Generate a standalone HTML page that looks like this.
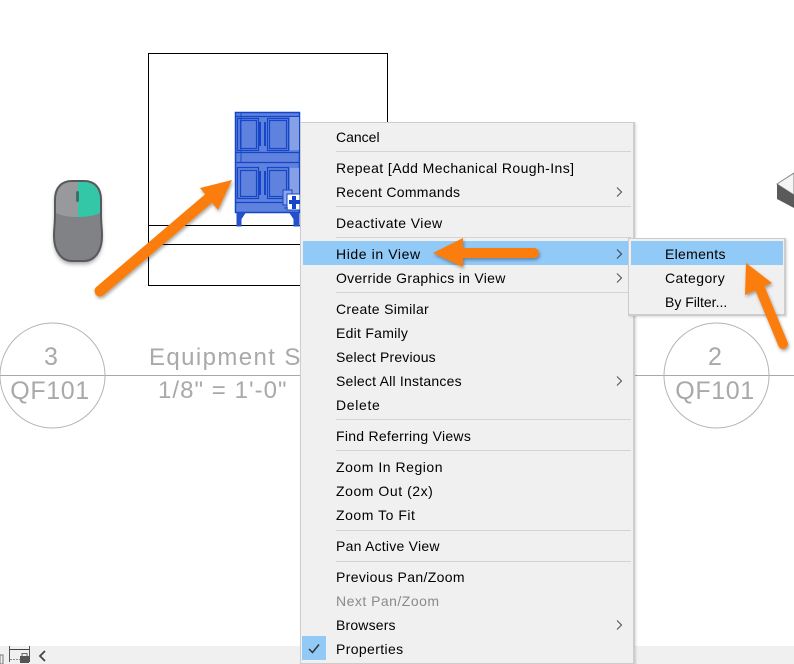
<!DOCTYPE html>
<html><head><meta charset="utf-8">
<style>
html,body{margin:0;padding:0;background:#fff}
#p{position:relative;width:794px;height:664px;overflow:hidden;background:#fff;font-family:"Liberation Sans",sans-serif}
.abs{position:absolute}
.m{position:absolute;left:336px;font-size:14px;line-height:20px;height:20px;color:#000;white-space:nowrap;letter-spacing:.17px}
.s{position:absolute;left:336px;width:295px;height:1px;background:#d4d4d4}
.a{position:absolute;left:615px;width:8px;height:10px}
.g{position:absolute;color:#a9a9a9;white-space:nowrap;text-align:center}
</style></head><body><div id="p">

<svg class="abs" style="left:0;top:0" width="794" height="664">
<rect x="148.500" y="53.500" width="239" height="232" fill="none" stroke="#000"/>
<path d="M148 225.500H388M148 244.500H388" stroke="#000"/>
<path d="M0 375.500H794" stroke="#a8a8a8"/>
<circle cx="52.500" cy="375.500" r="52.500" fill="none" stroke="#b4b4b4"/>
<circle cx="716.500" cy="375.500" r="52.500" fill="none" stroke="#b4b4b4"/>
<path d="M777 184L794 173V195Z" fill="#f4f4f4" stroke="#888"/>
<path d="M777 184L794 195V208L777 199Z" fill="#5a5a5a"/>

<!-- cabinet -->
<rect x="235.500" y="112.500" width="64" height="100" fill="#5f82de" stroke="#1546c8" stroke-width="1.500"/>
<g fill="none" stroke="#1546c8" stroke-width="1.200">
<path d="M236 116.500H299M236 152.500H299M236 162.500H299M236 202.500H299"/>
<rect x="237.500" y="118.500" width="21" height="32"/>
<rect x="267.500" y="118.500" width="21" height="32"/>
<rect x="237.500" y="167.500" width="21" height="31"/>
<rect x="267.500" y="167.500" width="21" height="31"/>
<rect x="240.500" y="120.500" width="16" height="28"/>
<rect x="269.500" y="120.500" width="17" height="28"/>
<rect x="240.500" y="170.500" width="16" height="26"/>
<rect x="269.500" y="170.500" width="17" height="26"/>
</g>
<path d="M259 122H261V146H259ZM264 122H266V146H264ZM259 171H261V195H259ZM264 171H266V195H264Z" fill="#1546c8"/>
<path d="M290 117H299V150H290ZM290 168H299V199H290Z" fill="#86a0e6"/>
<path d="M241 113V162" stroke="#1546c8" stroke-width="2" fill="none" opacity=".45"/>
<path d="M237 213V226H241V219L245 213Z" fill="#2450cc" stroke="#2450cc"/>
<path d="M299 213V226H294V219L290 213Z" fill="#2450cc" stroke="#2450cc"/>
<rect x="283" y="190" width="9" height="15" fill="#8fa6ea" stroke="#1546c8"/>
<rect x="287" y="194" width="13" height="16" fill="#fff" stroke="#1546c8"/>
<path d="M289 202H300M294 196V209" stroke="#1546c8" stroke-width="4"/>
<path d="M284 208H288" stroke="#1546c8"/>

<defs>
<filter id="sh" x="-20%" y="-20%" width="140%" height="140%"><feGaussianBlur stdDeviation="2"/></filter>
</defs>
<!-- mouse -->
<path d="M55 200C55 187 62 181 72 181H84C94 181 101 187 101 200V215C101 224 102 228 102 236C102 252 94 261 84 261H72C62 261 54 252 54 236C54 228 55 224 55 215Z" transform="translate(0,3)" fill="#777" filter="url(#sh)" opacity=".7"/>
<path d="M55 200C55 187 62 181 72 181H84C94 181 101 187 101 200V215C101 224 102 228 102 236C102 252 94 261 84 261H72C62 261 54 252 54 236C54 228 55 224 55 215Z" fill="#818286" stroke="#58595c" stroke-width="2"/>
<path d="M56 200C56 188 63 182 72 182H78V217C69 217 62 216 56 213Z" fill="#98999c"/>
<path d="M78 182H84C93 182 100 188 100 200V213C94 216 86 217 78 217Z" fill="#33c7a7"/>
<rect x="76" y="191" width="3" height="11" rx="1.500" fill="#3f6f68"/>
</svg>

<div class="g" style="left:1px;top:342px;width:100px;font-size:25px;line-height:30px">3</div>
<div class="g" style="left:0;top:376px;width:100px;font-size:25px;line-height:30px;letter-spacing:.6px">QF101</div>
<div class="g" style="left:665px;top:342px;width:100px;font-size:25px;line-height:30px">2</div>
<div class="g" style="left:664px;top:376px;width:102px;font-size:25px;line-height:30px;letter-spacing:.6px">QF101</div>
<div class="g" style="left:149px;top:344px;font-size:24px;line-height:28px;letter-spacing:1.400px;text-align:left">Equipment S</div>
<div class="g" style="left:158px;top:377px;font-size:24px;line-height:28px;letter-spacing:1.050px;text-align:left">1/8" = 1'-0"</div>

<div class="abs" style="left:0;top:646px;width:794px;height:18px;background:#f0f0f0"></div>
<svg class="abs" style="left:0;top:645px" width="60" height="19">
<path d="M0 10H3V19H0Z" fill="none" stroke="#777"/>
<path d="M9.500 1V17M29.500 1V17" stroke="#555" fill="none"/>
<path d="M10 4.500H29" stroke="#444" fill="none"/>
<path d="M10 14.500H20" stroke="#888" stroke-dasharray="2 1"/>
<rect x="20" y="11" width="9" height="7" fill="#555"/>
<path d="M22 11V8.500H27V11" stroke="#666" fill="none"/>
<path d="M45 6L40 11L45 16" stroke="#444" stroke-width="1.800" fill="none"/>
</svg>

<div class="abs" style="left:300px;top:122px;width:332px;height:540px;background:#f0f0f0;border:2px solid #cdcdcd;border-width:1px 2px 2px 1px;box-shadow:1px 1px 2px rgba(0,0,0,.15)"></div>
<div class="abs" style="left:303px;top:241px;width:326px;height:24px;background:#91c9f7"></div>

<div class="s" style="top:151px"></div>
<div class="s" style="top:206px"></div>
<div class="s" style="top:237px"></div>
<div class="s" style="top:292px"></div>
<div class="s" style="top:419px"></div>
<div class="s" style="top:450px"></div>
<div class="s" style="top:530px"></div>
<div class="s" style="top:561px"></div>

<div class="m" style="top:127px;letter-spacing:0">Cancel</div>
<div class="m" style="top:158px;letter-spacing:.41px">Repeat [Add Mechanical Rough-Ins]</div>
<div class="m" style="top:182px;letter-spacing:.3px">Recent Commands</div>
<div class="m" style="top:213px;letter-spacing:.43px">Deactivate View</div>
<div class="m" style="top:244px;letter-spacing:.59px">Hide in View</div>
<div class="m" style="top:268px;letter-spacing:.29px">Override Graphics in View</div>
<div class="m" style="top:299px;letter-spacing:.31px">Create Similar</div>
<div class="m" style="top:323px;letter-spacing:.27px">Edit Family</div>
<div class="m" style="top:347px">Select Previous</div>
<div class="m" style="top:371px;letter-spacing:.22px">Select All Instances</div>
<div class="m" style="top:395px;letter-spacing:.67px">Delete</div>
<div class="m" style="top:426px;letter-spacing:.27px">Find Referring Views</div>
<div class="m" style="top:457px;letter-spacing:.53px">Zoom In Region</div>
<div class="m" style="top:481px;letter-spacing:.55px">Zoom Out (2x)</div>
<div class="m" style="top:505px;letter-spacing:.53px">Zoom To Fit</div>
<div class="m" style="top:536px;letter-spacing:.24px">Pan Active View</div>
<div class="m" style="top:567px;letter-spacing:.35px">Previous Pan/Zoom</div>
<div class="m" style="top:591px;letter-spacing:.48px;color:#8a8a8a">Next Pan/Zoom</div>
<div class="m" style="top:615px">Browsers</div>
<div class="m" style="top:639px;letter-spacing:.37px">Properties</div>

<svg class="a" style="top:187px" viewBox="0 0 8 10"><path d="M2 0.500L6.500 5L2 9.500" fill="none" stroke="#555" stroke-width="1.100"/></svg>
<svg class="a" style="top:249px" viewBox="0 0 8 10"><path d="M2 0.500L6.500 5L2 9.500" fill="none" stroke="#444" stroke-width="1.100"/></svg>
<svg class="a" style="top:273px" viewBox="0 0 8 10"><path d="M2 0.500L6.500 5L2 9.500" fill="none" stroke="#555" stroke-width="1.100"/></svg>
<svg class="a" style="top:376px" viewBox="0 0 8 10"><path d="M2 0.500L6.500 5L2 9.500" fill="none" stroke="#555" stroke-width="1.100"/></svg>
<svg class="a" style="top:620px" viewBox="0 0 8 10"><path d="M2 0.500L6.500 5L2 9.500" fill="none" stroke="#555" stroke-width="1.100"/></svg>

<div class="abs" style="left:302px;top:636px;width:24px;height:24px;background:#91c9f7"></div>
<svg class="abs" style="left:302px;top:636px" width="24" height="24"><path d="M7 13L10.500 16.500L17 8.500" fill="none" stroke="#333" stroke-width="1.500"/></svg>

<div class="abs" style="left:628px;top:238px;width:155px;height:75px;background:#f0f0f0;border:2px solid #cdcdcd;border-width:1px 2px 2px 1px;box-shadow:1px 1px 2px rgba(0,0,0,.15)"></div>
<div class="abs" style="left:631px;top:241px;width:152px;height:24px;background:#91c9f7"></div>
<div class="m" style="left:665px;top:244px;letter-spacing:.3px">Elements</div>
<div class="m" style="left:665px;top:268px;letter-spacing:.42px">Category</div>
<div class="m" style="left:665px;top:292px;letter-spacing:0">By Filter...</div>

<svg class="abs" style="left:0;top:0" width="794" height="664">
<defs><filter id="as" x="-20%" y="-20%" width="150%" height="150%"><feDropShadow dx="1" dy="2" stdDeviation="1.500" flood-color="#000" flood-opacity=".35"/></filter></defs>
<g fill="#fb7d07" stroke="none" filter="url(#as)">
<path d="M100 291L208 199" stroke="#fb7d07" stroke-width="11" stroke-linecap="round"/>
<path d="M232 180L200 188L218 210Z"/>
<path d="M462 253H534" stroke="#fb7d07" stroke-width="10" stroke-linecap="round"/>
<path d="M433 253L463 238V267Z"/>
<path d="M783 344L759 286" stroke="#fb7d07" stroke-width="10" stroke-linecap="round"/>
<path d="M746 263L772 283L745 295Z"/>
</g>
</svg>
</div></body></html>
